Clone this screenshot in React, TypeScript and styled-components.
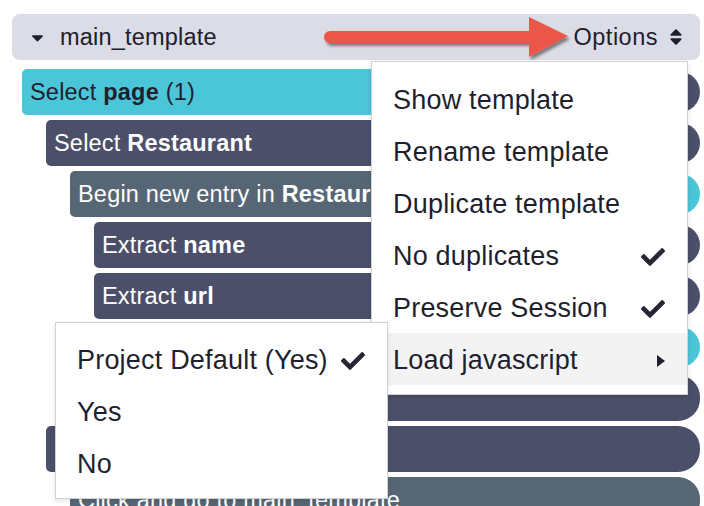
import React from "react";
import styled, { createGlobalStyle } from "styled-components";
import { FaCaretDown, FaCheck, FaSort } from "react-icons/fa";

const GlobalStyle = createGlobalStyle`
  html, body {
    margin: 0;
    padding: 0;
    background: #ffffff;
  }
  body {
    font-family: "Liberation Sans", Helvetica, Arial, sans-serif;
    color: #1f1f2d;
  }
`;

const colors = {
  cyan: "#4bc6d8",
  dark: "#4c4f69",
  slate: "#566674",
  header: "#dcdce6",
  arrow: "#ea5646"
};

const Page = styled.div`
  width: 704px;
  height: 506px;
  box-sizing: border-box;
  padding: 14px 4px 0 12px;
  overflow: hidden;
`;

const TemplateHeader = styled.div`
  position: relative;
  z-index: 2;
`;

const HeaderBar = styled.div`
  display: flex;
  align-items: center;
  justify-content: space-between;
  height: 46px;
  padding: 0 14px 0 16px;
  background: ${colors.header};
  border-radius: 8px;
  font-size: 23.5px;
  letter-spacing: 0.2px;
`;

const TemplateName = styled.div`
  display: flex;
  align-items: center;
  gap: 13px;
  color: #20202c;
`;

const OptionsToggle = styled.div`
  display: flex;
  align-items: center;
  gap: 8px;
  color: #20202c;
  letter-spacing: 0.5px;
`;

const ArrowMark = styled.svg`
  position: absolute;
  left: 306px;
  top: -2px;
  pointer-events: none;
`;

const Menu = styled.div`
  position: absolute;
  top: calc(100% + 1px);
  right: 12px;
  width: 317px;
  box-sizing: border-box;
  padding: 11px 0 9px;
  background: #ffffff;
  border: 1px solid #d2d2d6;
  box-shadow: 0 2px 5px rgba(0, 0, 0, 0.12);
`;

const MenuItem = styled.div<{ $active?: boolean }>`
  position: relative;
  display: flex;
  align-items: center;
  justify-content: space-between;
  box-sizing: border-box;
  height: 52px;
  padding: 3px 22px 0 21px;
  font-size: 27px;
  letter-spacing: 0.2px;
  color: #1f1f2d;
  background: ${props => (props.$active ? "#f3f3f4" : "transparent")};
`;

const SubmenuCaret = styled.span`
  width: 0;
  height: 0;
  margin-right: 0;
  border-top: 6px solid transparent;
  border-bottom: 6px solid transparent;
  border-left: 8px solid #1f1f2d;
`;

const SubMenu = styled.div`
  position: absolute;
  top: -11px;
  right: calc(100% - 16px);
  width: 333px;
  box-sizing: border-box;
  padding: 10px 0 9px;
  background: #ffffff;
  border: 1px solid #d2d2d6;
  box-shadow: 0 2px 5px rgba(0, 0, 0, 0.1);
  z-index: 3;
`;

const RowList = styled.div`
  display: flex;
  flex-direction: column;
  gap: 5px;
  margin-top: 9px;
`;

const Row = styled.div<{ $depth: number }>`
  display: flex;
  height: 46px;
  margin-left: ${props => 10 + props.$depth * 24}px;
`;

const RowLabel = styled.div<{ $color: string; $light?: boolean }>`
  flex: 1;
  display: flex;
  align-items: center;
  padding-left: 8px;
  white-space: pre;
  overflow: hidden;
  font-size: 23.5px;
  letter-spacing: 0.2px;
  border-radius: 5px 0 0 5px;
  background: ${props => props.$color};
  color: ${props => (props.$light ? "#1f1f2d" : "#ffffff")};

  b {
    font-weight: 700;
  }
`;

const RowCap = styled.div<{ $color: string; $inset?: boolean }>`
  width: 22px;
  height: ${props => (props.$inset ? "40px" : "46px")};
  align-self: center;
  border-radius: 0 23px 23px 0;
  background: ${props => props.$color};
`;

interface IStep {
  depth: number;
  color: string;
  cap: string;
  inset?: boolean;
  light?: boolean;
  prefix?: string;
  name?: string;
  suffix?: string;
}

// rows 6 and 7 sit fully behind the open submenu, so they carry no text
const steps: Array<IStep> = [
  { depth: 0, color: colors.cyan, cap: colors.dark, inset: true, light: true, prefix: "Select ", name: "page", suffix: " (1)" },
  { depth: 1, color: colors.dark, cap: colors.dark, inset: true, prefix: "Select ", name: "Restaurant" },
  { depth: 2, color: colors.slate, cap: colors.cyan, inset: true, prefix: "Begin new entry in ", name: "Restaurant" },
  { depth: 3, color: colors.dark, cap: colors.dark, inset: true, prefix: "Extract ", name: "name" },
  { depth: 3, color: colors.dark, cap: colors.dark, inset: true, prefix: "Extract ", name: "url" },
  { depth: 3, color: colors.dark, cap: colors.cyan, inset: true },
  { depth: 2, color: colors.dark, cap: colors.dark },
  { depth: 1, color: colors.dark, cap: colors.dark, prefix: "Select ", name: "next" },
  { depth: 2, color: colors.slate, cap: colors.slate, prefix: "Click and go to main_template" }
];

const menuItems = [
  { label: "Show template" },
  { label: "Rename template" },
  { label: "Duplicate template" },
  { label: "No duplicates", checked: true },
  { label: "Preserve Session", checked: true }
];

const jsOptions = [
  { label: "Project Default (Yes)", checked: true },
  { label: "Yes" },
  { label: "No" }
];

const App: React.FC = () => {
  return (
    <>
      <GlobalStyle />
      <Page>
        <TemplateHeader>
          <HeaderBar>
            <TemplateName>
              <FaCaretDown size={19} color="#1f1f2d" />
              <span>main_template</span>
            </TemplateName>
            <OptionsToggle>
              <span>Options</span>
              <FaSort size={20} color="#1f1f2d" />
            </OptionsToggle>
          </HeaderBar>
          <ArrowMark width="260" height="58" viewBox="0 0 260 58">
            <defs>
              <filter id="arrowShadow" x="-10%" y="-30%" width="120%" height="170%">
                <feDropShadow dx="2" dy="3" stdDeviation="1.6" floodColor="#000" floodOpacity="0.45" />
              </filter>
            </defs>
            <g filter="url(#arrowShadow)" fill={colors.arrow}>
              <line x1="12" y1="25" x2="214" y2="25" stroke={colors.arrow} strokeWidth="12" strokeLinecap="round" />
              <polygon points="211,5 211,45 250,24" />
            </g>
          </ArrowMark>
          <Menu>
            {menuItems.map((item, index) => (
              <MenuItem key={`menu${index}`}>
                <span>{item.label}</span>
                {item.checked ? <FaCheck size={24} color="#262634" /> : null}
              </MenuItem>
            ))}
            <MenuItem $active>
              <span>Load javascript</span>
              <SubmenuCaret />
              <SubMenu>
                {jsOptions.map((option, index) => (
                  <MenuItem key={`js${index}`}>
                    <span>{option.label}</span>
                    {option.checked ? <FaCheck size={24} color="#262634" /> : null}
                  </MenuItem>
                ))}
              </SubMenu>
            </MenuItem>
          </Menu>
        </TemplateHeader>
        <RowList>
          {steps.map((step, index) => (
            <Row key={`step${index}`} $depth={step.depth}>
              <RowLabel $color={step.color} $light={step.light}>
                {step.prefix ? (
                  <span>
                    {step.prefix}
                    {step.name ? <b>{step.name}</b> : null}
                    {step.suffix}
                  </span>
                ) : null}
              </RowLabel>
              <RowCap $color={step.cap} $inset={step.inset} />
            </Row>
          ))}
        </RowList>
      </Page>
    </>
  );
};

export default App;
